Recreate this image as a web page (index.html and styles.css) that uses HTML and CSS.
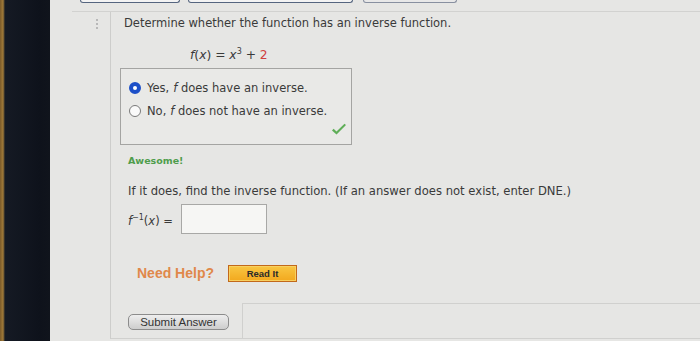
FILE: index.html
```html
<!DOCTYPE html>
<html>
<head>
<meta charset="utf-8">
<link rel="stylesheet" href="styles.css">
</head>
<body>
<div class="bezel"></div>
<div class="screen">
  <div class="topbar">
    <span class="tab tab1"></span>
    <span class="tab tab2"></span>
    <span class="tab tab3"></span>
  </div>
  <div class="main">
    <div class="gutter"><span class="grip"></span></div>
    <div class="panel">
      <div class="content">
        <p class="prompt">Determine whether the function has an inverse function.</p>
        <p class="formula"><i>f</i>(<i>x</i>) = <i>x</i><sup>3</sup> + <span class="red">2</span></p>
        <div class="choices">
          <label class="choice"><span class="radio on"></span>Yes, <i>f</i>&nbsp;does have an inverse.</label>
          <label class="choice"><span class="radio"></span>No, <i>f</i>&nbsp;does not have an inverse.</label>
          <svg class="check" width="16" height="13" viewBox="0 0 16 13"><path d="M1 7.5 L5.5 11.5 L15 2 L13.5 0.8 L5.5 8.5 L2.6 5.8 Z" fill="#5fae58"/></svg>
        </div>
        <p class="awesome">Awesome!</p>
        <p class="question">If it does, find the inverse function. (If an answer does not exist, enter DNE.)</p>
        <div class="answer">
          <span class="alabel"><i>f</i><sup>−1</sup>(<i>x</i>) =</span>
          <span class="input"></span>
        </div>
        <div class="help">
          <span class="needhelp">Need Help?</span>
          <span class="readit">Read It</span>
        </div>
      </div>
      <div class="footer">
        <div class="submitcell"><span class="submit">Submit Answer</span></div>
        <div class="rest"></div>
      </div>
    </div>
  </div>
</div>
</body>
</html>
```
FILE: styles.css
```css
html, body {
  margin: 0;
  padding: 0;
}
body {
  width: 700px;
  height: 341px;
  overflow: hidden;
  display: flex;
  background: #e4e4e2;
  font-family: "DejaVu Sans", Verdana, sans-serif;
  color: #3a3a3a;
}
.bezel {
  width: 50px;
  flex: none;
  background: linear-gradient(to right, #7a5a2a 0, #a07a38 3px, #151a24 5px, #0e121b 40px, #10141c 50px);
}
.screen {
  flex: 1;
  display: flex;
  flex-direction: column;
  background: #e6e6e4;
}
.topbar {
  flex: none;
  height: 11px;
  margin-left: 22px;
  padding-left: 8px;
  border-bottom: 1px solid #d2d2d0;
  display: flex;
  align-items: flex-start;
}
.tab {
  height: 2px;
  border: 1px solid #55657f;
  border-top: none;
  border-radius: 0 0 3px 3px;
  background: #f3f3f3;
}
.tab1 { width: 98px; }
.tab2 { width: 163px; margin-left: 8px; }
.tab3 { width: 92px; margin-left: 10px; background: #e8e8e8; border-color: #8890a0; }
.main {
  flex: none;
  display: flex;
}
.gutter {
  width: 60px;
  flex: none;
  position: relative;
}
.grip {
  position: absolute;
  left: 46px;
  top: 7px;
  width: 2px;
  height: 10px;
  background: repeating-linear-gradient(to bottom, #b8b8b8 0 2px, transparent 2px 4px);
}
.panel {
  flex: 1;
  display: flex;
  flex-direction: column;
  border-left: 1px solid #cdcdcb;
}
.content {
  padding-left: 13px;
}
p { margin: 0; }
.prompt {
  font-size: 11.5px;
  line-height: 16px;
  padding-top: 3px;
}
.formula {
  margin-top: 16px;
  margin-left: 66px;
  font-size: 12.3px;
  line-height: 16px;
}
.formula sup, .alabel sup {
  font-size: 8px;
  line-height: 0;
  vertical-align: 5px;
}
.red { color: #d0403c; }
.choices {
  margin-top: 5px;
  margin-left: -4px;
  width: 230px;
  height: 64px;
  border: 1px solid #a4a4a2;
  background: #e9e9e7;
  position: relative;
  padding-top: 11px;
  box-sizing: content-box;
}
.choice {
  display: flex;
  align-items: center;
  height: 16px;
  margin-bottom: 7px;
  padding-left: 8px;
  font-size: 11.5px;
}
.choice i { margin-left: 4px; }
.radio {
  width: 12px;
  height: 12px;
  border-radius: 50%;
  border: 1px solid #7a7a7a;
  background: #fafafa;
  box-sizing: border-box;
  margin-right: 6px;
  flex: none;
}
.radio.on {
  border: 4px solid #1c4fc8;
  background: #ffffff;
}
.check {
  position: absolute;
  right: 4px;
  bottom: 8px;
}
.awesome {
  margin-top: 9px;
  margin-left: 4px;
  font-size: 9.5px;
  font-weight: bold;
  line-height: 14px;
  color: #4f9d4c;
}
.question {
  margin-top: 15px;
  margin-left: 4px;
  font-size: 11.6px;
  line-height: 16px;
}
.answer {
  margin-top: 5px;
  margin-left: 4px;
  display: flex;
  align-items: center;
  height: 30px;
}
.alabel {
  font-size: 11.5px;
  width: 53px;
  padding-top: 3px;
}
.input {
  width: 84px;
  height: 28px;
  border: 1px solid #a8a8a6;
  background: #f6f6f4;
}
.help {
  margin-top: 29px;
  margin-left: 13px;
  display: flex;
  align-items: center;
  height: 20px;
}
.needhelp {
  font-family: "Liberation Sans", Arial, sans-serif;
  font-weight: bold;
  font-size: 14px;
  color: #e0884a;
  width: 91px;
}
.readit {
  width: 67px;
  height: 15px;
  border: 1px solid #c2691a;
  box-shadow: inset 0 0 0 1px #f8d060;
  background: linear-gradient(to bottom, #f9c642, #f2a81e);
  font-family: "Liberation Sans", Arial, sans-serif;
  font-weight: bold;
  font-size: 9.5px;
  color: #2a2a2a;
  text-align: center;
  line-height: 15px;
}
.footer {
  margin-top: 20px;
  display: flex;
  height: 35px;
  border-bottom: 1px solid #d0d0ce;
}
.submitcell {
  width: 131px;
  padding-left: 17px;
  padding-top: 11px;
  box-sizing: border-box;
}
.submit {
  display: block;
  width: 99px;
  height: 14px;
  border: 1px solid #8c8c8c;
  border-radius: 5px;
  background: linear-gradient(to bottom, #eeeeee, #cdcdcd);
  font-family: "Liberation Sans", Arial, sans-serif;
  font-size: 11.5px;
  line-height: 14px;
  text-align: center;
  color: #333;
}
.rest {
  flex: 1;
  border-top: 1px solid #d0d0ce;
  border-left: 1px solid #d0d0ce;
}
```
